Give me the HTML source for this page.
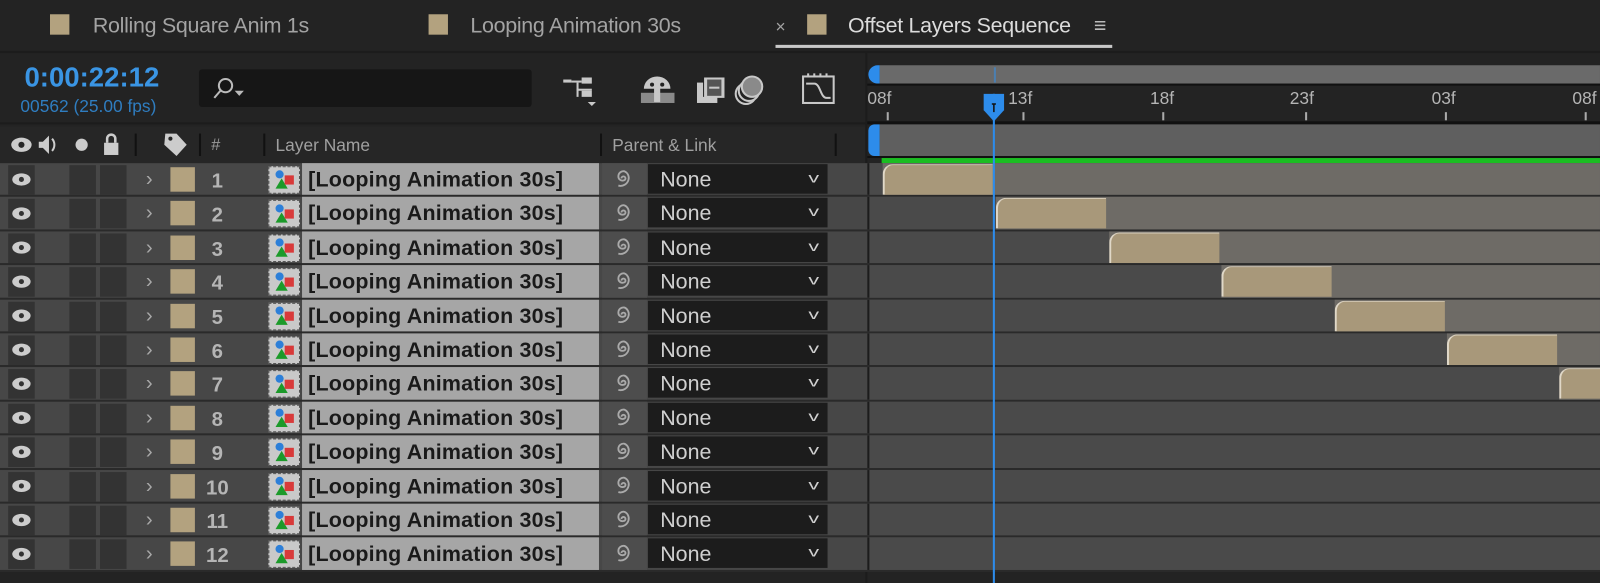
<!DOCTYPE html><html><head><meta charset="utf-8"><style>
*{margin:0;padding:0;box-sizing:border-box}
body{width:1600px;height:572px;background:#232323;position:relative;overflow:hidden;font-family:"Liberation Sans",sans-serif}
#w{position:absolute;left:0;top:0;width:1568px;height:561px;transform:scale(1.0204,1.0196);transform-origin:0 0}
.a{position:absolute}
.tab{position:absolute;top:14px;font-size:21px;color:#a3a3a3;letter-spacing:-0.3px}
.sw{position:absolute;background:#b3a27f}
.row{position:absolute;left:0;width:1568px;height:33.4px;border-bottom:2px solid #2a2a2a;background:#474747}
.row .eye{position:absolute;left:8px;top:2px;width:26px;height:29px;background:#333}
.row .b1,.row .b2{position:absolute;top:2px;width:26px;height:29px;background:#333}
.row .b1{left:68px}.row .b2{left:98px}
.row .chev{position:absolute;left:143px;top:5px;color:#a8a8a8;font-size:20px}
.row .s{position:absolute;left:167px;top:4px;width:24px;height:24px;background:#b3a27f}
.row .n{position:absolute;left:190px;width:46px;text-align:center;top:7px;color:#b5b5b5;font-size:20px;font-weight:bold}
.row .ic{position:absolute;left:263px;top:3px;width:31px;height:27px;background:#c9c9c9;border:1px dashed #555}
.row .nm{position:absolute;left:296px;top:0;width:291px;height:31.4px;background:#a6a6a6;color:#1a1a1a;font-size:21px;font-weight:bold;padding:5px 0 0 6px;letter-spacing:0.2px}
.row .sp{position:absolute;left:590px;top:0;width:44px;height:31.4px;background:#4d4d4d}
.row .dd{position:absolute;left:635px;top:1px;width:176px;height:29px;background:#1c1c1c;color:#d0d0d0;font-size:21px;padding:4px 0 0 12px}
.row .dd i{position:absolute;right:10px;top:5px;font-style:normal;font-size:14px;transform:scaleX(1.5)}
.row .tl{position:absolute;left:850px;top:0;width:718px;height:31.4px;background:#4a4a4a;border-left:2px solid #1c1c1c}
.row .bar{position:absolute;top:0;height:31.4px;background:#6e6b66;right:0}
.row .clip{position:absolute;top:1px;height:30px;width:108px;background:#a8987a;border-radius:10px 0 0 0;border-left:2px solid #e0d8c8;border-top:1px solid #d8cfbd}
</style></head><body><div id="w">
<!-- tabs -->
<div class="sw" style="left:49px;top:14px;width:19px;height:20px"></div>
<div class="tab" style="left:91px">Rolling Square Anim 1s</div>
<div class="sw" style="left:420px;top:14px;width:19px;height:20px"></div>
<div class="tab" style="left:461px">Looping Animation 30s</div>
<div class="tab" style="left:760px;font-size:17px;top:17px">×</div>
<div class="sw" style="left:791px;top:14px;width:19px;height:20px"></div>
<div class="tab" style="left:831px;color:#dcdcdc">Offset Layers Sequence</div>
<div class="tab" style="left:1072px;color:#bbb">≡</div>
<div class="a" style="left:760px;top:44px;width:330px;height:3px;background:#c8c8c8"></div>
<div class="a" style="left:0;top:50px;width:1568px;height:2px;background:#1c1c1c"></div>
<!-- time -->
<div class="a" style="left:24px;top:61px;font-size:27px;font-weight:bold;color:#3a95e4">0:00:22:12</div>
<div class="a" style="left:20px;top:95px;font-size:17px;color:#2f7dc0">00562 (25.00 fps)</div>
<div class="a" style="left:195px;top:68px;width:326px;height:37px;background:#161616;border-radius:3px"></div>
<svg class="a" style="left:205px;top:75px" width="40" height="25"><circle cx="16" cy="9" r="6.5" fill="none" stroke="#bbb" stroke-width="2"/><line x1="11" y1="14" x2="5" y2="21" stroke="#bbb" stroke-width="2"/><path d="M25 14h9l-4.5 5z" fill="#bbb"/></svg>
<!-- toolbar icons -->
<svg class="a" style="left:550px;top:72px" width="45" height="34" fill="#c8c8c8"><rect x="2" y="6" width="8" height="3"/><rect x="10" y="7" width="10" height="2"/><rect x="20" y="4" width="10" height="6"/><rect x="15" y="9" width="2" height="14"/><rect x="15" y="15" width="15" height="2"/><rect x="20" y="17" width="10" height="6"/><path d="M26 28h8l-4 4z"/></svg>
<svg class="a" style="left:628px;top:74px" width="36" height="28" fill="#c8c8c8"><path d="M3 13a13 12 0 0 1 26 0z"/><rect x="0" y="17" width="33" height="10" fill="#8a8a8a"/><rect x="13" y="12" width="6" height="14"/><circle cx="11" cy="9" r="2" fill="#222"/><circle cx="21" cy="9" r="2" fill="#222"/></svg>
<svg class="a" style="left:683px;top:73px" width="30" height="30" fill="#c8c8c8"><rect x="0" y="8" width="20" height="20"/><rect x="6" y="2" width="20" height="20" fill="#232323"/><rect x="7" y="3" width="20" height="20"/><rect x="10" y="5" width="14" height="16" fill="#555"/><rect x="12" y="12" width="10" height="2" fill="#c8c8c8"/></svg>
<svg class="a" style="left:718px;top:72px" width="34" height="32"><circle cx="13" cy="20" r="10" fill="none" stroke="#c8c8c8" stroke-width="2"/><circle cx="16" cy="17" r="10" fill="#232323" stroke="#c8c8c8" stroke-width="2"/><circle cx="19" cy="13" r="10" fill="#8a8a8a" stroke="#c8c8c8" stroke-width="2"/></svg>
<svg class="a" style="left:784px;top:70px" width="36" height="34"><rect x="3" y="5" width="30" height="26" fill="none" stroke="#c8c8c8" stroke-width="2"/><path d="M6 12h8c6 0 6 14 12 14h4" fill="none" stroke="#c8c8c8" stroke-width="2"/><path d="M8 2v4M14 2v4M20 2v4M26 2v4" stroke="#c8c8c8" stroke-width="2"/></svg>
<!-- header -->
<div class="a" style="left:0;top:124px;width:850px;height:36px;background:#262626"></div>
<div class="a" style="left:0;top:120px;width:850px;height:2px;background:#1c1c1c"></div>
<svg class="a" style="left:8px;top:130px" width="115" height="25" fill="#ccc"><ellipse cx="13" cy="12" rx="10" ry="7"/><circle cx="13" cy="12" r="3" fill="#262626"/><path d="M30 9h4l6-6v18l-6-6h-4z"/><path d="M43 6a9 9 0 0 1 0 12" stroke="#ccc" stroke-width="2" fill="none"/><circle cx="72" cy="12" r="6"/><rect x="94" y="10" width="14" height="12"/><path d="M97 10v-4a4 4 0 0 1 8 0v4" fill="none" stroke="#ccc" stroke-width="2.5"/></svg>
<div class="a" style="left:132px;top:131px;width:2px;height:22px;background:#111"></div>
<svg class="a" style="left:158px;top:128px" width="28" height="28"><path d="M4 3h11l10 11-10 11L3 14z" fill="#ccc"/><circle cx="9" cy="8" r="2" fill="#262626"/></svg>
<div class="a" style="left:195px;top:131px;width:2px;height:22px;background:#111"></div>
<div class="a" style="left:207px;top:134px;color:#999;font-size:16px">#</div>
<div class="a" style="left:258px;top:131px;width:2px;height:22px;background:#111"></div>
<div class="a" style="left:270px;top:133px;color:#a0a0a0;font-size:17px">Layer Name</div>
<div class="a" style="left:588px;top:131px;width:2px;height:22px;background:#111"></div>
<div class="a" style="left:600px;top:133px;color:#a0a0a0;font-size:17px">Parent &amp; Link</div>
<div class="a" style="left:818px;top:131px;width:2px;height:22px;background:#111"></div>
<!-- timeline top -->
<div class="a" style="left:848px;top:52px;width:2px;height:520px;background:#1c1c1c"></div>
<div class="a" style="left:862px;top:64px;width:706px;height:18px;background:#6a6a6a"></div>
<div class="a" style="left:851px;top:64px;width:11px;height:18px;background:#2d8ceb;border-radius:9px 0 0 9px"></div>
<div class="a" style="left:974px;top:66px;width:2px;height:15px;background:#4b7fb0"></div>
<div class="a" style="left:850px;top:82px;width:718px;height:2px;background:#111"></div>
<div class="a" style="left:850px;top:87px;color:#b5b5b5;font-size:17px">08f</div>
<div class="a" style="left:988px;top:87px;color:#b5b5b5;font-size:17px">13f</div>
<div class="a" style="left:1127px;top:87px;color:#b5b5b5;font-size:17px">18f</div>
<div class="a" style="left:1264px;top:87px;color:#b5b5b5;font-size:17px">23f</div>
<div class="a" style="left:1403px;top:87px;color:#b5b5b5;font-size:17px">03f</div>
<div class="a" style="left:1541px;top:87px;color:#b5b5b5;font-size:17px">08f</div>
<div class="a" style="left:869px;top:110px;width:2px;height:8px;background:#aaa"></div>
<div class="a" style="left:1002px;top:110px;width:2px;height:8px;background:#aaa"></div>
<div class="a" style="left:1139px;top:110px;width:2px;height:8px;background:#aaa"></div>
<div class="a" style="left:1279px;top:110px;width:2px;height:8px;background:#aaa"></div>
<div class="a" style="left:1416px;top:110px;width:2px;height:8px;background:#aaa"></div>
<div class="a" style="left:1553px;top:110px;width:2px;height:8px;background:#aaa"></div>
<div class="a" style="left:850px;top:119px;width:718px;height:3px;background:#111"></div>
<div class="a" style="left:862px;top:122px;width:706px;height:31px;background:#5f5f5f"></div>
<div class="a" style="left:851px;top:122px;width:11px;height:31px;background:#2d8ceb;border-radius:6px 0 0 6px"></div>
<div class="a" style="left:850px;top:153px;width:718px;height:2px;background:#111"></div>
<div class="a" style="left:864px;top:155px;width:704px;height:5px;background:#1bbd22"></div>
<!-- rows -->
<div class="row" style="top:160px"><div class="eye"></div><div class="b1"></div><div class="b2"></div><div class="chev">›</div><div class="s"></div><div class="n">1</div><div class="ic"></div><div class="nm">[Looping Animation 30s]</div><div class="sp"></div><div class="dd">None<i>v</i></div><div class="tl"><div class="bar" style="left:13px"></div><div class="clip" style="left:13px"></div></div></div>
<div class="row" style="top:193.4px"><div class="eye"></div><div class="b1"></div><div class="b2"></div><div class="chev">›</div><div class="s"></div><div class="n">2</div><div class="ic"></div><div class="nm">[Looping Animation 30s]</div><div class="sp"></div><div class="dd">None<i>v</i></div><div class="tl"><div class="bar" style="left:124px"></div><div class="clip" style="left:124px"></div></div></div>
<div class="row" style="top:226.8px"><div class="eye"></div><div class="b1"></div><div class="b2"></div><div class="chev">›</div><div class="s"></div><div class="n">3</div><div class="ic"></div><div class="nm">[Looping Animation 30s]</div><div class="sp"></div><div class="dd">None<i>v</i></div><div class="tl"><div class="bar" style="left:235px"></div><div class="clip" style="left:235px"></div></div></div>
<div class="row" style="top:260.2px"><div class="eye"></div><div class="b1"></div><div class="b2"></div><div class="chev">›</div><div class="s"></div><div class="n">4</div><div class="ic"></div><div class="nm">[Looping Animation 30s]</div><div class="sp"></div><div class="dd">None<i>v</i></div><div class="tl"><div class="bar" style="left:345px"></div><div class="clip" style="left:345px"></div></div></div>
<div class="row" style="top:293.6px"><div class="eye"></div><div class="b1"></div><div class="b2"></div><div class="chev">›</div><div class="s"></div><div class="n">5</div><div class="ic"></div><div class="nm">[Looping Animation 30s]</div><div class="sp"></div><div class="dd">None<i>v</i></div><div class="tl"><div class="bar" style="left:456px"></div><div class="clip" style="left:456px"></div></div></div>
<div class="row" style="top:327px"><div class="eye"></div><div class="b1"></div><div class="b2"></div><div class="chev">›</div><div class="s"></div><div class="n">6</div><div class="ic"></div><div class="nm">[Looping Animation 30s]</div><div class="sp"></div><div class="dd">None<i>v</i></div><div class="tl"><div class="bar" style="left:566px"></div><div class="clip" style="left:566px"></div></div></div>
<div class="row" style="top:360.4px"><div class="eye"></div><div class="b1"></div><div class="b2"></div><div class="chev">›</div><div class="s"></div><div class="n">7</div><div class="ic"></div><div class="nm">[Looping Animation 30s]</div><div class="sp"></div><div class="dd">None<i>v</i></div><div class="tl"><div class="bar" style="left:676px"></div><div class="clip" style="left:676px"></div></div></div>
<div class="row" style="top:393.8px"><div class="eye"></div><div class="b1"></div><div class="b2"></div><div class="chev">›</div><div class="s"></div><div class="n">8</div><div class="ic"></div><div class="nm">[Looping Animation 30s]</div><div class="sp"></div><div class="dd">None<i>v</i></div><div class="tl"></div></div>
<div class="row" style="top:427.2px"><div class="eye"></div><div class="b1"></div><div class="b2"></div><div class="chev">›</div><div class="s"></div><div class="n">9</div><div class="ic"></div><div class="nm">[Looping Animation 30s]</div><div class="sp"></div><div class="dd">None<i>v</i></div><div class="tl"></div></div>
<div class="row" style="top:460.6px"><div class="eye"></div><div class="b1"></div><div class="b2"></div><div class="chev">›</div><div class="s"></div><div class="n">10</div><div class="ic"></div><div class="nm">[Looping Animation 30s]</div><div class="sp"></div><div class="dd">None<i>v</i></div><div class="tl"></div></div>
<div class="row" style="top:494px"><div class="eye"></div><div class="b1"></div><div class="b2"></div><div class="chev">›</div><div class="s"></div><div class="n">11</div><div class="ic"></div><div class="nm">[Looping Animation 30s]</div><div class="sp"></div><div class="dd">None<i>v</i></div><div class="tl"></div></div>
<div class="row" style="top:527.4px"><div class="eye"></div><div class="b1"></div><div class="b2"></div><div class="chev">›</div><div class="s"></div><div class="n">12</div><div class="ic"></div><div class="nm">[Looping Animation 30s]</div><div class="sp"></div><div class="dd">None<i>v</i></div><div class="tl"></div></div>
<!-- eye glyphs -->
<svg class="a" style="left:8px;top:160px" width="26" height="400" fill="#ccc">
<defs><g id="e"><ellipse cx="13" cy="16" rx="9" ry="6"/><circle cx="13" cy="16" r="2.5" fill="#333"/></g></defs>
<use href="#e" y="0"/><use href="#e" y="33.4"/><use href="#e" y="66.8"/><use href="#e" y="100.2"/><use href="#e" y="133.6"/><use href="#e" y="167"/><use href="#e" y="200.4"/><use href="#e" y="233.8"/><use href="#e" y="267.2"/><use href="#e" y="300.6"/><use href="#e" y="334"/><use href="#e" y="367.4"/>
</svg>
<!-- spiral glyphs -->
<svg class="a" style="left:598px;top:160px" width="24" height="400" fill="none" stroke="#aaa" stroke-width="1.8">
<defs><g id="p"><path d="M11 15a2 2 0 1 1 2 2a4 4 0 0 1-5-4a5 5 0 0 1 6-5a7 7 0 0 1 4 8a8 8 0 0 1-10 6"/></g></defs>
<use href="#p" y="0"/><use href="#p" y="33.4"/><use href="#p" y="66.8"/><use href="#p" y="100.2"/><use href="#p" y="133.6"/><use href="#p" y="167"/><use href="#p" y="200.4"/><use href="#p" y="233.8"/><use href="#p" y="267.2"/><use href="#p" y="300.6"/><use href="#p" y="334"/><use href="#p" y="367.4"/>
</svg>
<!-- footage icon glyphs -->
<svg class="a" style="left:265px;top:160px" width="28" height="400">
<defs><g id="f"><circle cx="9" cy="11" r="4" fill="#2d7fd8"/><path d="M5 25l6-10 6 10z" fill="#1c9a2a"/><rect x="14" y="12" width="9" height="9" fill="#d83a3a"/></g></defs>
<use href="#f" y="0"/><use href="#f" y="33.4"/><use href="#f" y="66.8"/><use href="#f" y="100.2"/><use href="#f" y="133.6"/><use href="#f" y="167"/><use href="#f" y="200.4"/><use href="#f" y="233.8"/><use href="#f" y="267.2"/><use href="#f" y="300.6"/><use href="#f" y="334"/><use href="#f" y="367.4"/>
</svg>
<!-- playhead -->
<div class="a" style="left:973px;top:92px;width:2px;height:480px;background:#2d8ceb"></div>
<svg class="a" style="left:963px;top:92px" width="22" height="28"><path d="M1 0h20v16l-10 11-10-11z" fill="#2d8ceb"/><path d="M9 10h4M11 10v8" stroke="#111" stroke-width="1.5"/></svg>
</div></body></html>
